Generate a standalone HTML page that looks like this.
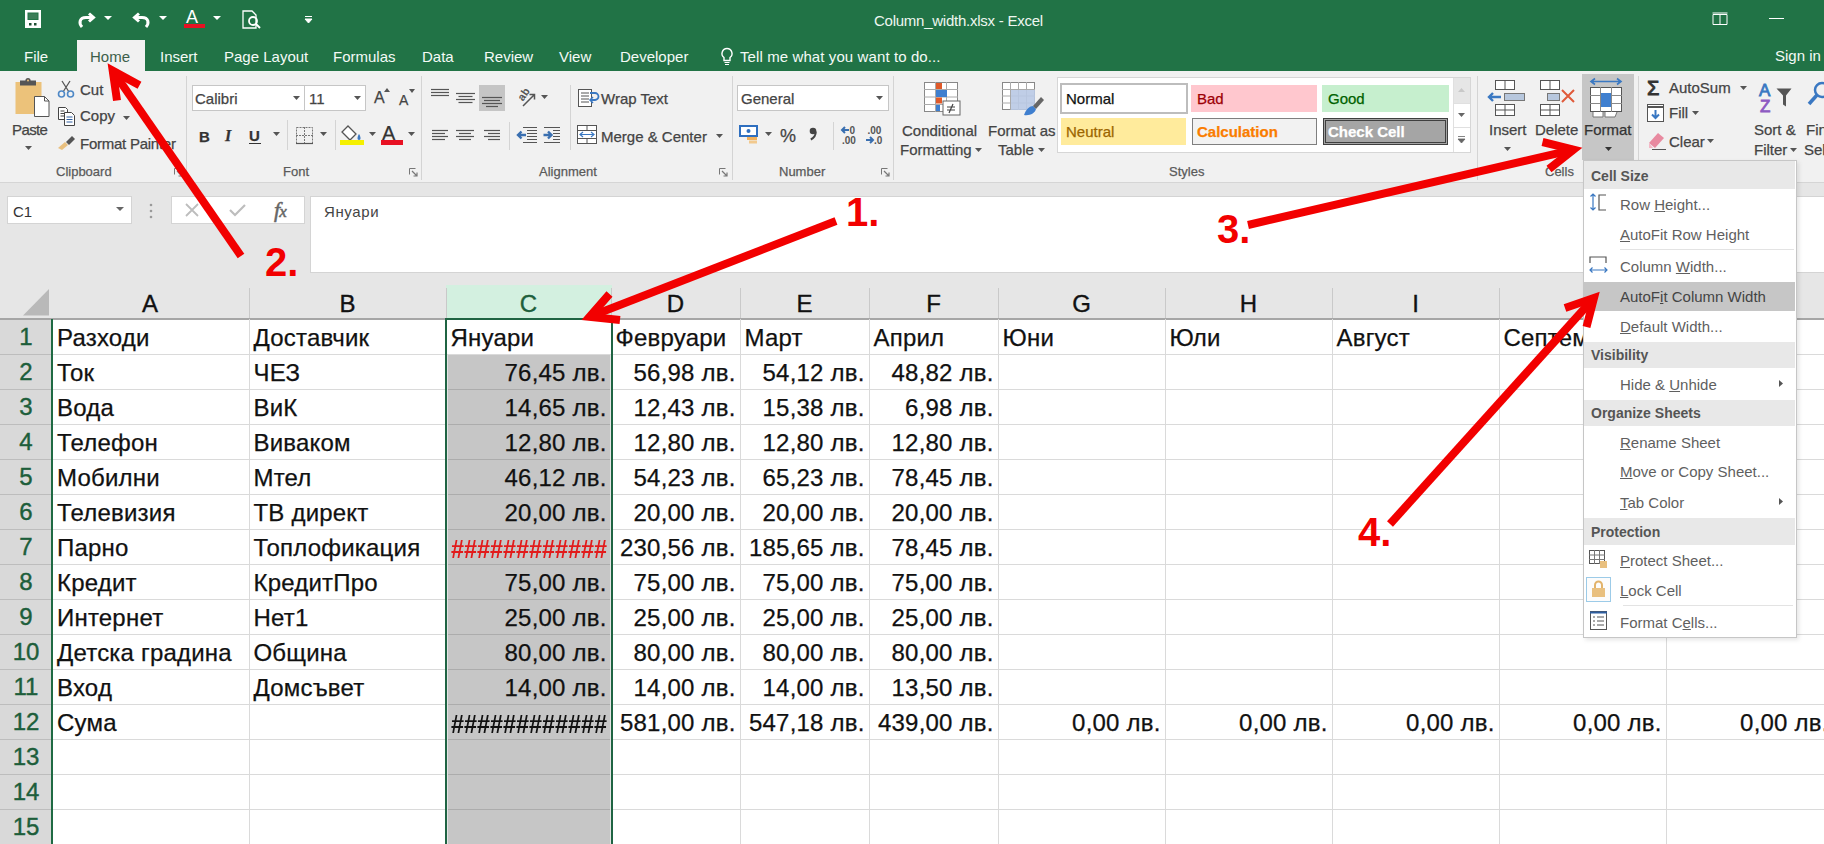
<!DOCTYPE html><html><head><meta charset="utf-8"><title>Excel</title><style>
html,body{margin:0;padding:0;}
body{width:1824px;height:844px;overflow:hidden;position:relative;background:#fff;font-family:'Liberation Sans', sans-serif;}
.t{position:absolute;white-space:nowrap;line-height:1;}
svg{overflow:visible}
</style></head><body>
<div style="position:absolute;left:0px;top:0px;width:1824px;height:71px;background:#217346;"></div>
<svg style="position:absolute;left:25px;top:10px;" width="17" height="18" viewBox="0 0 17 18"><rect x="0" y="0" width="16" height="18" fill="#ffffff"/><rect x="2.5" y="2.5" width="11" height="7.5" fill="#217346"/><rect x="3.5" y="3.5" width="9" height="5.5" fill="#3c7d58"/><rect x="4" y="13" width="2.5" height="2.5" fill="#1d4f33"/><rect x="9" y="13" width="2.5" height="2.5" fill="#1d4f33"/></svg>
<svg style="position:absolute;left:77px;top:12px;" width="20" height="17" viewBox="0 0 20 17"><path d="M5 15 C1.5 11 2.5 5.5 9 5.5 H16" fill="none" stroke="#ffffff" stroke-width="3"/><path d="M12 1.5 L16.5 5.5 L12 9.5" fill="none" stroke="#ffffff" stroke-width="3"/></svg>
<svg style="position:absolute;left:104px;top:16px;" width="8" height="5" viewBox="0 0 8 5"><path d="M0 0h8l-4 4z" fill="#ffffff"/></svg>
<svg style="position:absolute;left:131px;top:12px;" width="20" height="17" viewBox="0 0 20 17"><path d="M15 15 C18.5 11 17.5 5.5 11 5.5 H4" fill="none" stroke="#ffffff" stroke-width="3"/><path d="M8 1.5 L3.5 5.5 L8 9.5" fill="none" stroke="#ffffff" stroke-width="3"/></svg>
<svg style="position:absolute;left:159px;top:16px;" width="8" height="5" viewBox="0 0 8 5"><path d="M0 0h8l-4 4z" fill="#ffffff"/></svg>
<div class="t" style="left:186px;top:7.70px;font-size:18px;color:#ffffff;font-weight:normal;">A</div>
<div style="position:absolute;left:184px;top:24px;width:21px;height:4px;background:#e81123;"></div>
<svg style="position:absolute;left:213px;top:16px;" width="8" height="5" viewBox="0 0 8 5"><path d="M0 0h8l-4 4z" fill="#ffffff"/></svg>
<svg style="position:absolute;left:242px;top:10px;" width="20" height="19" viewBox="0 0 20 19"><path d="M1 1h9l4 4v13h-13z" fill="none" stroke="#ffffff" stroke-width="1.3"/><circle cx="11" cy="11" r="4" fill="none" stroke="#ffffff" stroke-width="1.8"/><path d="M14 14l4 4" stroke="#ffffff" stroke-width="2"/></svg>
<svg style="position:absolute;left:305px;top:16px;" width="7" height="8" viewBox="0 0 7 8"><path d="M0 0.5h7M0 3h7l-3.5 4z" fill="#ffffff" stroke="#ffffff" stroke-width="1"/></svg>
<div class="t" style="left:874px;top:13.25px;font-size:15px;color:#eef7f0;font-weight:normal;letter-spacing:-0.25px;">Column_width.xlsx - Excel</div>
<svg style="position:absolute;left:1712px;top:12px;" width="16" height="13" viewBox="0 0 16 13"><path d="M0.5 1h15M1 2.5h14v10h-14zM8 2.5v10" fill="none" stroke="#ffffff" stroke-width="1"/></svg>
<div style="position:absolute;left:1769px;top:18px;width:15px;height:1px;background:#ffffff;"></div>
<div class="t" style="left:24px;top:48.65px;font-size:15px;color:#f4faf6;font-weight:normal;">File</div>
<div style="position:absolute;left:77px;top:40px;width:68px;height:32px;background:#f1f1f1;"></div>
<div class="t" style="left:90px;top:48.65px;font-size:15px;color:#3d5f4a;font-weight:normal;">Home</div>
<div class="t" style="left:160px;top:48.65px;font-size:15px;color:#f4faf6;font-weight:normal;">Insert</div>
<div class="t" style="left:224px;top:48.65px;font-size:15px;color:#f4faf6;font-weight:normal;">Page Layout</div>
<div class="t" style="left:333px;top:48.65px;font-size:15px;color:#f4faf6;font-weight:normal;">Formulas</div>
<div class="t" style="left:422px;top:48.65px;font-size:15px;color:#f4faf6;font-weight:normal;">Data</div>
<div class="t" style="left:484px;top:48.65px;font-size:15px;color:#f4faf6;font-weight:normal;">Review</div>
<div class="t" style="left:559px;top:48.65px;font-size:15px;color:#f4faf6;font-weight:normal;">View</div>
<div class="t" style="left:620px;top:48.65px;font-size:15px;color:#f4faf6;font-weight:normal;">Developer</div>
<svg style="position:absolute;left:720px;top:47px;" width="14" height="19" viewBox="0 0 14 19"><path d="M7 1.5a5 5 0 0 1 3 9v3h-6v-3a5 5 0 0 1 3-9z" fill="none" stroke="#ffffff" stroke-width="1.4"/><path d="M4.5 15.5h5M5 17.5h4" stroke="#ffffff" stroke-width="1.2"/></svg>
<div class="t" style="left:740px;top:48.65px;font-size:15px;color:#f4faf6;font-weight:normal;letter-spacing:0.1px;">Tell me what you want to do...</div>
<div class="t" style="left:1775px;top:48.25px;font-size:15px;color:#f4faf6;font-weight:normal;">Sign in</div>
<div style="position:absolute;left:0px;top:71px;width:1824px;height:112px;background:#f1f1f1;"></div>
<div style="position:absolute;left:0px;top:182px;width:1824px;height:1px;background:#d5d5d5;"></div>
<svg style="position:absolute;left:14px;top:77px;" width="38" height="42" viewBox="0 0 38 42"><rect x="1.5" y="5" width="26" height="32" fill="#ecc27a"/><rect x="6" y="3.5" width="16" height="5" fill="#555"/><circle cx="14" cy="3.5" r="2.6" fill="#555"/><circle cx="14" cy="3.5" r="1" fill="#ecc27a"/><path d="M20.5 19.5h10l4.5 4.5v15.5h-14.5z" fill="#fff" stroke="#555" stroke-width="1"/><path d="M30.5 19.5v4.5h4.5" fill="none" stroke="#555" stroke-width="1"/></svg>
<div class="t" style="left:12px;top:122.25px;font-size:15px;color:#444444;font-weight:normal;-webkit-text-stroke-width:0.25px;letter-spacing:-0.6px;">Paste</div>
<svg style="position:absolute;left:25px;top:146px;" width="7" height="4" viewBox="0 0 7 4"><path d="M0 0h7l-3.5 4z" fill="#555"/></svg>
<svg style="position:absolute;left:57px;top:80px;" width="18" height="18" viewBox="0 0 18 18"><path d="M5 1l7 11M13 1l-7 11" stroke="#555" stroke-width="1.3"/><circle cx="4.5" cy="14" r="3" fill="none" stroke="#4e88c6" stroke-width="1.6"/><circle cx="13.5" cy="14" r="3" fill="none" stroke="#4e88c6" stroke-width="1.6"/></svg>
<div class="t" style="left:80px;top:82.25px;font-size:15px;color:#444444;font-weight:normal;-webkit-text-stroke-width:0.25px;">Cut</div>
<svg style="position:absolute;left:57px;top:106px;" width="19" height="20" viewBox="0 0 19 20"><path d="M1.5 1.5h7l2 2v10h-9z" fill="#fff" stroke="#444" stroke-width="1"/><path d="M3.5 5h4M3.5 7.5h4M3.5 10h4" stroke="#444" stroke-width="1"/><path d="M7.5 6.5h7l3 3v10h-10z" fill="#fff" stroke="#444" stroke-width="1"/><path d="M9.5 11h6M9.5 13.5h6M9.5 16h6" stroke="#2f5fa0" stroke-width="1"/></svg>
<div class="t" style="left:80px;top:108.25px;font-size:15px;color:#444444;font-weight:normal;-webkit-text-stroke-width:0.25px;">Copy</div>
<svg style="position:absolute;left:123px;top:116px;" width="7" height="4" viewBox="0 0 7 4"><path d="M0 0h7l-3.5 4z" fill="#555"/></svg>
<svg style="position:absolute;left:57px;top:135px;" width="19" height="16" viewBox="0 0 19 16"><path d="M1 13l7-6 3 3-6 5z" fill="#e9c07f"/><path d="M9 7l6-6 3 3-6 6z" fill="#555"/></svg>
<div class="t" style="left:80px;top:136.25px;font-size:15px;color:#444444;font-weight:normal;-webkit-text-stroke-width:0.25px;letter-spacing:-0.25px;">Format Painter</div>
<div class="t" style="left:56px;top:164.95px;font-size:13px;color:#5a5a5a;font-weight:normal;-webkit-text-stroke-width:0.25px;">Clipboard</div>
<svg style="position:absolute;left:174px;top:168px;" width="9" height="9" viewBox="0 0 9 9"><path d="M0.5 0.5h6M0.5 0.5v6" stroke="#777" stroke-width="1" fill="none"/><path d="M3 3l5 5M8 4.5v3.5h-3.5" stroke="#777" stroke-width="1.2" fill="none"/></svg>
<div style="position:absolute;left:186px;top:76px;width:1px;height:104px;background:#d4d4d4;"></div>
<div style="position:absolute;left:192px;top:85px;width:113px;height:26px;background:#fff;box-sizing:border-box;border:1px solid #c6c6c6;"></div>
<div class="t" style="left:195px;top:91.25px;font-size:15px;color:#444444;font-weight:normal;-webkit-text-stroke-width:0.25px;">Calibri</div>
<svg style="position:absolute;left:293px;top:96px;" width="7" height="4" viewBox="0 0 7 4"><path d="M0 0h7l-3.5 4z" fill="#555"/></svg>
<div style="position:absolute;left:304px;top:85px;width:62px;height:26px;background:#fff;box-sizing:border-box;border:1px solid #c6c6c6;"></div>
<div class="t" style="left:309px;top:91.25px;font-size:15px;color:#444444;font-weight:normal;-webkit-text-stroke-width:0.25px;">11</div>
<svg style="position:absolute;left:354px;top:96px;" width="7" height="4" viewBox="0 0 7 4"><path d="M0 0h7l-3.5 4z" fill="#555"/></svg>
<div class="t" style="left:374px;top:90.40px;font-size:16px;color:#444444;font-weight:normal;-webkit-text-stroke-width:0.25px;">A</div>
<svg style="position:absolute;left:384px;top:88px;" width="6" height="4" viewBox="0 0 6 4"><path d="M0 4l3-4 3 4z" fill="#555"/></svg>
<div class="t" style="left:399px;top:93.10px;font-size:14px;color:#444444;font-weight:normal;-webkit-text-stroke-width:0.25px;">A</div>
<svg style="position:absolute;left:409px;top:89px;" width="6" height="4" viewBox="0 0 6 4"><path d="M0 0h6l-3 4z" fill="#555"/></svg>
<div class="t" style="left:199px;top:129.25px;font-size:15px;color:#333;font-weight:bold;-webkit-text-stroke-width:0.25px;">B</div>
<div class="t" style="left:225px;top:128.40px;font-size:16px;color:#333;font-weight:normal;-webkit-text-stroke-width:0.25px;font-style:italic;font-family:'Liberation Serif';font-weight:bold;">I</div>
<div class="t" style="left:249px;top:128.25px;font-size:15px;color:#333;font-weight:bold;-webkit-text-stroke-width:0.25px;">U</div>
<div style="position:absolute;left:249px;top:143px;width:12px;height:1px;background:#333;"></div>
<svg style="position:absolute;left:273px;top:132px;" width="7" height="4" viewBox="0 0 7 4"><path d="M0 0h7l-3.5 4z" fill="#555"/></svg>
<div style="position:absolute;left:287px;top:120px;width:1px;height:30px;background:#d4d4d4;"></div>
<svg style="position:absolute;left:296px;top:127px;" width="18" height="17" viewBox="0 0 18 17"><rect x="0.5" y="0.5" width="16" height="16" fill="none" stroke="#777" stroke-width="1" stroke-dasharray="2 1"/><path d="M8.5 0v17M0 8.5h17" stroke="#777" stroke-width="1" stroke-dasharray="2 1"/><path d="M0 16.5h17" stroke="#555" stroke-width="1.2"/></svg>
<svg style="position:absolute;left:320px;top:132px;" width="7" height="4" viewBox="0 0 7 4"><path d="M0 0h7l-3.5 4z" fill="#555"/></svg>
<div style="position:absolute;left:335px;top:120px;width:1px;height:30px;background:#d4d4d4;"></div>
<svg style="position:absolute;left:339px;top:122px;" width="26" height="23" viewBox="0 0 26 23"><path d="M6 4l8 8-6 6-8-8z" fill="#fff" stroke="#555" stroke-width="1.3" transform="translate(3,0)"/><path d="M20 12c2 3 2 6 0 6s-2-3 0-6z" fill="#3a78c2"/><rect x="1" y="18" width="24" height="5" fill="#f5f000"/></svg>
<svg style="position:absolute;left:369px;top:132px;" width="7" height="4" viewBox="0 0 7 4"><path d="M0 0h7l-3.5 4z" fill="#555"/></svg>
<div class="t" style="left:382px;top:123.00px;font-size:20px;color:#333;font-weight:normal;-webkit-text-stroke-width:0.25px;">A</div>
<div style="position:absolute;left:381px;top:140px;width:22px;height:5px;background:#e81123;"></div>
<svg style="position:absolute;left:408px;top:132px;" width="7" height="4" viewBox="0 0 7 4"><path d="M0 0h7l-3.5 4z" fill="#555"/></svg>
<div class="t" style="left:283px;top:164.95px;font-size:13px;color:#5a5a5a;font-weight:normal;-webkit-text-stroke-width:0.25px;">Font</div>
<svg style="position:absolute;left:409px;top:168px;" width="9" height="9" viewBox="0 0 9 9"><path d="M0.5 0.5h6M0.5 0.5v6" stroke="#777" stroke-width="1" fill="none"/><path d="M3 3l5 5M8 4.5v3.5h-3.5" stroke="#777" stroke-width="1.2" fill="none"/></svg>
<div style="position:absolute;left:421px;top:76px;width:1px;height:104px;background:#d4d4d4;"></div>
<svg style="position:absolute;left:431px;top:88.5px;" width="22" height="18" viewBox="0 0 22 18"><path d="M0 0.5h18" stroke="#555" stroke-width="1.2"/><path d="M0 3.5h18" stroke="#555" stroke-width="1.2"/><path d="M0 6.5h18" stroke="#555" stroke-width="1.2"/></svg>
<svg style="position:absolute;left:456px;top:92.5px;" width="22" height="18" viewBox="0 0 22 18"><path d="M0 0.5h19" stroke="#555" stroke-width="1.2"/><path d="M2.5 3.5h14" stroke="#555" stroke-width="1.2"/><path d="M0 6.5h19" stroke="#555" stroke-width="1.2"/><path d="M2.5 9.5h14" stroke="#555" stroke-width="1.2"/></svg>
<div style="position:absolute;left:479px;top:85px;width:26px;height:26px;background:#c5c5c5;"></div>
<svg style="position:absolute;left:482px;top:97px;" width="22" height="18" viewBox="0 0 22 18"><path d="M0 0.5h20" stroke="#555" stroke-width="1.2"/><path d="M2 3.5h16" stroke="#555" stroke-width="1.2"/><path d="M0 6.5h20" stroke="#555" stroke-width="1.2"/><path d="M4 9.5h12" stroke="#555" stroke-width="1.2"/></svg>
<svg style="position:absolute;left:516px;top:86px;" width="24" height="22" viewBox="0 0 24 22"><text x="2" y="12" font-size="11" font-weight="bold" fill="#555" font-family="Liberation Sans" transform="rotate(-55 8 9)">ab</text><path d="M7 20l11-11M13.5 8.5h5v5" fill="none" stroke="#555" stroke-width="1.5"/></svg>
<svg style="position:absolute;left:541px;top:95px;" width="7" height="4" viewBox="0 0 7 4"><path d="M0 0h7l-3.5 4z" fill="#555"/></svg>
<div style="position:absolute;left:570px;top:85px;width:1px;height:65px;background:#d4d4d4;"></div>
<svg style="position:absolute;left:578px;top:89px;" width="22" height="19" viewBox="0 0 22 19"><rect x="0.5" y="0.5" width="13" height="17" fill="#fff" stroke="#555"/><path d="M3 4h8M3 7h8M3 10h8M3 13h8" stroke="#555"/><path d="M12 4h5a3 3 0 0 1 0 7h-4" fill="none" stroke="#3a78c2" stroke-width="1.8"/><path d="M15 8l-3 3 3 3" fill="none" stroke="#3a78c2" stroke-width="1.5"/></svg>
<div class="t" style="left:601px;top:91.25px;font-size:15px;color:#444444;font-weight:normal;-webkit-text-stroke-width:0.25px;">Wrap Text</div>
<svg style="position:absolute;left:432px;top:129.5px;" width="22" height="18" viewBox="0 0 22 18"><path d="M0 0.5h16" stroke="#555" stroke-width="1.2"/><path d="M0 3.5h13" stroke="#555" stroke-width="1.2"/><path d="M0 6.5h16" stroke="#555" stroke-width="1.2"/><path d="M0 9.5h13" stroke="#555" stroke-width="1.2"/></svg>
<svg style="position:absolute;left:456px;top:129.5px;" width="22" height="18" viewBox="0 0 22 18"><path d="M0 0.5h18" stroke="#555" stroke-width="1.2"/><path d="M3 3.5h12" stroke="#555" stroke-width="1.2"/><path d="M0 6.5h18" stroke="#555" stroke-width="1.2"/><path d="M3 9.5h12" stroke="#555" stroke-width="1.2"/></svg>
<svg style="position:absolute;left:484px;top:129.5px;" width="22" height="18" viewBox="0 0 22 18"><path d="M0 0.5h16" stroke="#555" stroke-width="1.2"/><path d="M4 3.5h12" stroke="#555" stroke-width="1.2"/><path d="M0 6.5h16" stroke="#555" stroke-width="1.2"/><path d="M4 9.5h12" stroke="#555" stroke-width="1.2"/></svg>
<div style="position:absolute;left:509px;top:122px;width:1px;height:28px;background:#d4d4d4;"></div>
<svg style="position:absolute;left:516px;top:126px;" width="22" height="18" viewBox="0 0 22 18"><path d="M7 1.5h14M11 4.5h10M11 7.5h10M11 10.5h10M11 13.5h10M7 16.5h14" stroke="#555" stroke-width="1.1"/><path d="M10 9h-8M5.5 5.5l-3.5 3.5 3.5 3.5" fill="none" stroke="#3a6fb0" stroke-width="2.4"/></svg>
<svg style="position:absolute;left:543px;top:126px;" width="22" height="18" viewBox="0 0 22 18"><path d="M1 1.5h16M10 4.5h7M10 7.5h7M10 10.5h7M10 13.5h7M1 16.5h16" stroke="#555" stroke-width="1.1"/><path d="M0.5 9h8M5 5.5l3.5 3.5-3.5 3.5" fill="none" stroke="#3a6fb0" stroke-width="2.4"/></svg>
<svg style="position:absolute;left:577px;top:125px;" width="21" height="20" viewBox="0 0 21 20"><rect x="0.5" y="0.5" width="19" height="18" fill="#fff" stroke="#555"/><path d="M0 5.5h20M0 13.5h20M10 0v5M10 14v5" stroke="#555"/><path d="M3 9.5h14M6 7l-3 2.5 3 2.5M14 7l3 2.5-3 2.5" fill="none" stroke="#3a78c2" stroke-width="1.2"/></svg>
<div class="t" style="left:601px;top:129.25px;font-size:15px;color:#444444;font-weight:normal;-webkit-text-stroke-width:0.25px;">Merge &amp; Center</div>
<svg style="position:absolute;left:716px;top:134px;" width="7" height="4" viewBox="0 0 7 4"><path d="M0 0h7l-3.5 4z" fill="#555"/></svg>
<div class="t" style="left:539px;top:164.95px;font-size:13px;color:#5a5a5a;font-weight:normal;-webkit-text-stroke-width:0.25px;">Alignment</div>
<svg style="position:absolute;left:719px;top:168px;" width="9" height="9" viewBox="0 0 9 9"><path d="M0.5 0.5h6M0.5 0.5v6" stroke="#777" stroke-width="1" fill="none"/><path d="M3 3l5 5M8 4.5v3.5h-3.5" stroke="#777" stroke-width="1.2" fill="none"/></svg>
<div style="position:absolute;left:732px;top:76px;width:1px;height:104px;background:#d4d4d4;"></div>
<div style="position:absolute;left:737px;top:85px;width:152px;height:26px;background:#fff;box-sizing:border-box;border:1px solid #c6c6c6;"></div>
<div class="t" style="left:741px;top:91.25px;font-size:15px;color:#444444;font-weight:normal;-webkit-text-stroke-width:0.25px;">General</div>
<svg style="position:absolute;left:876px;top:96px;" width="7" height="4" viewBox="0 0 7 4"><path d="M0 0h7l-3.5 4z" fill="#555"/></svg>
<svg style="position:absolute;left:739px;top:125px;" width="22" height="20" viewBox="0 0 22 20"><rect x="1" y="1" width="17" height="10" fill="#fff" stroke="#2f6fbf" stroke-width="2"/><circle cx="9.5" cy="6" r="2" fill="#2f6fbf"/><rect x="8" y="12" width="10" height="3" fill="#f2b05a"/><rect x="10" y="15.5" width="8" height="3" fill="#f2c98e"/></svg>
<svg style="position:absolute;left:765px;top:132px;" width="7" height="4" viewBox="0 0 7 4"><path d="M0 0h7l-3.5 4z" fill="#555"/></svg>
<div class="t" style="left:780px;top:126.70px;font-size:18px;color:#444444;font-weight:normal;-webkit-text-stroke-width:0.25px;">%</div>
<svg style="position:absolute;left:808px;top:127px;" width="10" height="13" viewBox="0 0 10 13"><circle cx="5" cy="4" r="3.3" fill="#444"/><path d="M7.8 4.5c0 4-2 6.5-5 8" fill="none" stroke="#444" stroke-width="2"/></svg>
<div style="position:absolute;left:833px;top:122px;width:1px;height:28px;background:#d4d4d4;"></div>
<svg style="position:absolute;left:840px;top:125px;" width="20" height="20" viewBox="0 0 20 20"><path d="M9 5h-7M5 2l-3 3 3 3" fill="none" stroke="#3a6fb0" stroke-width="2"/><text x="9.5" y="9" font-size="10" font-weight="bold" fill="#555" font-family="Liberation Sans">0</text><text x="2" y="19" font-size="10" font-weight="bold" fill="#555" font-family="Liberation Sans">.00</text></svg>
<svg style="position:absolute;left:865px;top:125px;" width="20" height="20" viewBox="0 0 20 20"><text x="2.5" y="9" font-size="10" font-weight="bold" fill="#555" font-family="Liberation Sans">.00</text><path d="M1 15h7M5 12l3 3-3 3" fill="none" stroke="#3a6fb0" stroke-width="2"/><text x="9" y="19" font-size="10" font-weight="bold" fill="#555" font-family="Liberation Sans">.0</text></svg>
<div class="t" style="left:779px;top:164.95px;font-size:13px;color:#5a5a5a;font-weight:normal;-webkit-text-stroke-width:0.25px;">Number</div>
<svg style="position:absolute;left:881px;top:168px;" width="9" height="9" viewBox="0 0 9 9"><path d="M0.5 0.5h6M0.5 0.5v6" stroke="#777" stroke-width="1" fill="none"/><path d="M3 3l5 5M8 4.5v3.5h-3.5" stroke="#777" stroke-width="1.2" fill="none"/></svg>
<div style="position:absolute;left:893px;top:76px;width:1px;height:104px;background:#d4d4d4;"></div>
<svg style="position:absolute;left:924px;top:82px;" width="38" height="36" viewBox="0 0 38 36"><g stroke="#888" stroke-width="1" fill="#fff"><rect x="0.5" y="0.5" width="33" height="29"/></g><path d="M0 7.5h34M0 15h34M0 22.5h34M11.5 0v30M22.5 0v30" stroke="#aaa" stroke-width="1"/><rect x="12" y="1" width="6" height="6" fill="#e05a2a"/><rect x="12" y="8" width="11" height="7" fill="#3f7fcf"/><rect x="12" y="15.5" width="6" height="6" fill="#e05a2a"/><rect x="12" y="23" width="4" height="6" fill="#3f7fcf"/><rect x="19" y="19" width="17" height="14" fill="#fff" stroke="#666"/><path d="M23 25h8M23 28h8M29 22l-4 9" stroke="#444" stroke-width="1.2"/></svg>
<div class="t" style="left:902px;top:123.25px;font-size:15px;color:#444444;font-weight:normal;-webkit-text-stroke-width:0.25px;">Conditional</div>
<div class="t" style="left:900px;top:142.25px;font-size:15px;color:#444444;font-weight:normal;-webkit-text-stroke-width:0.25px;">Formatting</div>
<svg style="position:absolute;left:975px;top:148px;" width="7" height="4" viewBox="0 0 7 4"><path d="M0 0h7l-3.5 4z" fill="#555"/></svg>
<svg style="position:absolute;left:1002px;top:82px;" width="42" height="36" viewBox="0 0 42 36"><rect x="0.5" y="0.5" width="32" height="27" fill="#fff" stroke="#888"/><path d="M0 7.5h33M0 14h33M0 21h33M8.5 0v28M16.5 0v28M24.5 0v28" stroke="#aaa"/><rect x="9" y="8" width="24" height="20" fill="#b9c9e4" opacity="0.9"/><path d="M22 33c2-6 6-9 9-9l3 3c-1 4-6 7-12 6z" fill="#3f7fcf"/><path d="M31 24l8-9 3 3-8 9z" fill="#666"/></svg>
<div class="t" style="left:988px;top:123.25px;font-size:15px;color:#444444;font-weight:normal;-webkit-text-stroke-width:0.25px;">Format as</div>
<div class="t" style="left:998px;top:142.25px;font-size:15px;color:#444444;font-weight:normal;-webkit-text-stroke-width:0.25px;">Table</div>
<svg style="position:absolute;left:1038px;top:148px;" width="7" height="4" viewBox="0 0 7 4"><path d="M0 0h7l-3.5 4z" fill="#555"/></svg>
<div style="position:absolute;left:1057px;top:77px;width:414px;height:76px;background:#fff;box-sizing:border-box;border:1px solid #d6d6d6;"></div>
<div style="position:absolute;left:1060px;top:83px;width:128px;height:31px;background:#fff;box-sizing:border-box;border:2px solid #bdbdbd;"></div>
<div class="t" style="left:1066px;top:91.25px;font-size:15px;color:#111;font-weight:normal;-webkit-text-stroke-width:0.25px;">Normal</div>
<div style="position:absolute;left:1191px;top:85px;width:126px;height:27px;background:#ffc7ce;"></div>
<div class="t" style="left:1197px;top:91.25px;font-size:15px;color:#9c0006;font-weight:normal;-webkit-text-stroke-width:0.25px;">Bad</div>
<div style="position:absolute;left:1322px;top:85px;width:127px;height:27px;background:#c6efce;"></div>
<div class="t" style="left:1328px;top:91.25px;font-size:15px;color:#006100;font-weight:normal;-webkit-text-stroke-width:0.25px;">Good</div>
<div style="position:absolute;left:1061px;top:118px;width:125px;height:27px;background:#ffeb9c;"></div>
<div class="t" style="left:1066px;top:124.25px;font-size:15px;color:#9c6500;font-weight:normal;-webkit-text-stroke-width:0.25px;">Neutral</div>
<div style="position:absolute;left:1192px;top:118px;width:125px;height:27px;background:#f2f2f2;box-sizing:border-box;border:1px solid #7f7f7f;"></div>
<div class="t" style="left:1197px;top:124.25px;font-size:15px;color:#fa7d00;font-weight:bold;-webkit-text-stroke-width:0.25px;">Calculation</div>
<div style="position:absolute;left:1323px;top:118px;width:125px;height:27px;background:#a5a5a5;box-sizing:border-box;border:3px double #3f3f3f;"></div>
<div class="t" style="left:1328px;top:124.25px;font-size:15px;color:#fff;font-weight:bold;-webkit-text-stroke-width:0.25px;">Check Cell</div>
<div style="position:absolute;left:1453px;top:78px;width:17px;height:74px;background:#fff;box-sizing:border-box;border-left:1px solid #e0e0e0;"></div>
<div style="position:absolute;left:1454px;top:78px;width:16px;height:25px;background:#e6e6e6;"></div>
<svg style="position:absolute;left:1458px;top:88px;" width="7" height="4" viewBox="0 0 7 4"><path d="M0 4l3.5-4 3.5 4z" fill="#c8c8c8"/></svg>
<div style="position:absolute;left:1454px;top:103px;width:16px;height:1px;background:#e0e0e0;"></div>
<svg style="position:absolute;left:1458px;top:113px;" width="7" height="4" viewBox="0 0 7 4"><path d="M0 0h7l-3.5 4z" fill="#666"/></svg>
<div style="position:absolute;left:1454px;top:127px;width:16px;height:1px;background:#e0e0e0;"></div>
<svg style="position:absolute;left:1458px;top:136px;" width="7" height="7" viewBox="0 0 7 7"><path d="M0 0.5h7M0 3h7l-3.5 4z" fill="#666" stroke="#666" stroke-width="0.8"/></svg>
<div class="t" style="left:1169px;top:164.95px;font-size:13px;color:#5a5a5a;font-weight:normal;-webkit-text-stroke-width:0.25px;">Styles</div>
<div style="position:absolute;left:1477px;top:76px;width:1px;height:104px;background:#d4d4d4;"></div>
<svg style="position:absolute;left:1487px;top:80px;" width="40" height="36" viewBox="0 0 40 36"><rect x="8.5" y="0.5" width="19" height="9" fill="#fff" stroke="#555"/><path d="M18 0v10" stroke="#555"/><rect x="17.5" y="13.5" width="20" height="7" fill="#b7c7dd" stroke="#777"/><path d="M14 17h-12M6 13l-4 4 4 4" fill="none" stroke="#3a78c2" stroke-width="2.4"/><rect x="8.5" y="24.5" width="19" height="11" fill="#fff" stroke="#555"/><path d="M18 24v12M8 30h20" stroke="#555"/></svg>
<div class="t" style="left:1489px;top:122.25px;font-size:15px;color:#444444;font-weight:normal;-webkit-text-stroke-width:0.25px;">Insert</div>
<svg style="position:absolute;left:1504px;top:147px;" width="7" height="4" viewBox="0 0 7 4"><path d="M0 0h7l-3.5 4z" fill="#555"/></svg>
<svg style="position:absolute;left:1540px;top:80px;" width="40" height="36" viewBox="0 0 40 36"><rect x="0.5" y="0.5" width="19" height="9" fill="#fff" stroke="#555"/><path d="M10 0v10" stroke="#555"/><rect x="7.5" y="13.5" width="12" height="7" fill="#b7c7dd" stroke="#777"/><path d="M22 10l12 12M34 10l-12 12" stroke="#e05a3a" stroke-width="2"/><rect x="0.5" y="24.5" width="19" height="11" fill="#fff" stroke="#555"/><path d="M10 24v12M0 30h20" stroke="#555"/></svg>
<div class="t" style="left:1535px;top:122.25px;font-size:15px;color:#444444;font-weight:normal;-webkit-text-stroke-width:0.25px;">Delete</div>
<div style="position:absolute;left:1582px;top:74px;width:52px;height:86px;background:#c6c6c6;"></div>
<svg style="position:absolute;left:1589px;top:78px;" width="38" height="42" viewBox="0 0 38 42"><path d="M2 3.5h30M6 0.5l-4 3 4 3M28 0.5l4 3-4 3" fill="none" stroke="#3a78c2" stroke-width="1.6"/><rect x="1.5" y="9.5" width="31" height="24" fill="#fff" stroke="#555"/><path d="M1 17.5h32M1 25.5h32M11.5 9v25M22.5 9v25" stroke="#888"/><rect x="12" y="15" width="10" height="14" fill="#3f7fcf"/><path d="M4 34v5h10v-5M16 34v5h10l2-5" fill="#fff" stroke="#777"/></svg>
<div class="t" style="left:1584px;top:122.25px;font-size:15px;color:#333;font-weight:normal;-webkit-text-stroke-width:0.25px;">Format</div>
<svg style="position:absolute;left:1605px;top:147px;" width="7" height="4" viewBox="0 0 7 4"><path d="M0 0h7l-3.5 4z" fill="#333"/></svg>
<div class="t" style="left:1545px;top:164.95px;font-size:13px;color:#5a5a5a;font-weight:normal;-webkit-text-stroke-width:0.25px;">Cells</div>
<div style="position:absolute;left:1638px;top:76px;width:1px;height:104px;background:#d4d4d4;"></div>
<div class="t" style="left:1647px;top:78.00px;font-size:20px;color:#333;font-weight:normal;-webkit-text-stroke-width:0.25px;-webkit-text-stroke-width:0.9px;">&#931;</div>
<div class="t" style="left:1669px;top:80.25px;font-size:15px;color:#444444;font-weight:normal;-webkit-text-stroke-width:0.25px;">AutoSum</div>
<svg style="position:absolute;left:1740px;top:86px;" width="7" height="4" viewBox="0 0 7 4"><path d="M0 0h7l-3.5 4z" fill="#555"/></svg>
<svg style="position:absolute;left:1647px;top:104px;" width="18" height="19" viewBox="0 0 18 19"><rect x="0.5" y="0.5" width="16" height="17" fill="#fff" stroke="#555"/><path d="M0 3h17" stroke="#555" stroke-width="2"/><path d="M8.5 6v8M5 10.5l3.5 3.5 3.5-3.5" fill="none" stroke="#3a78c2" stroke-width="2"/></svg>
<div class="t" style="left:1669px;top:105.25px;font-size:15px;color:#444444;font-weight:normal;-webkit-text-stroke-width:0.25px;">Fill</div>
<svg style="position:absolute;left:1692px;top:111px;" width="7" height="4" viewBox="0 0 7 4"><path d="M0 0h7l-3.5 4z" fill="#555"/></svg>
<svg style="position:absolute;left:1647px;top:131px;" width="20" height="19" viewBox="0 0 20 19"><path d="M2 12l9-10 6 5-9 10z" fill="#e88aa0"/><path d="M2 12l4 5h-4z" fill="#f4b8c6"/><path d="M5 18.5h14" stroke="#555"/></svg>
<div class="t" style="left:1669px;top:134.25px;font-size:15px;color:#444444;font-weight:normal;-webkit-text-stroke-width:0.25px;">Clear</div>
<svg style="position:absolute;left:1707px;top:139px;" width="7" height="4" viewBox="0 0 7 4"><path d="M0 0h7l-3.5 4z" fill="#555"/></svg>
<div class="t" style="left:1759px;top:81.55px;font-size:17px;color:#3a78c2;font-weight:normal;-webkit-text-stroke-width:0.25px;-webkit-text-stroke-width:0.8px;">A</div>
<div class="t" style="left:1760px;top:97.55px;font-size:17px;color:#8e5bc2;font-weight:normal;-webkit-text-stroke-width:0.25px;-webkit-text-stroke-width:0.8px;">Z</div>
<svg style="position:absolute;left:1776px;top:88px;" width="17" height="20" viewBox="0 0 17 20"><path d="M0.5 0.5h15l-5.5 7v11l-3-2v-9z" fill="#555"/></svg>
<div class="t" style="left:1754px;top:122.25px;font-size:15px;color:#444444;font-weight:normal;-webkit-text-stroke-width:0.25px;">Sort &amp;</div>
<div class="t" style="left:1754px;top:142.25px;font-size:15px;color:#444444;font-weight:normal;-webkit-text-stroke-width:0.25px;">Filter</div>
<svg style="position:absolute;left:1790px;top:148px;" width="7" height="4" viewBox="0 0 7 4"><path d="M0 0h7l-3.5 4z" fill="#555"/></svg>
<svg style="position:absolute;left:1808px;top:80px;" width="20" height="34" viewBox="0 0 20 34"><circle cx="14" cy="10" r="7" fill="none" stroke="#3a78c2" stroke-width="2.5"/><path d="M9 15l-8 9" stroke="#3a78c2" stroke-width="3.5"/></svg>
<div class="t" style="left:1806px;top:122.25px;font-size:15px;color:#444444;font-weight:normal;-webkit-text-stroke-width:0.25px;">Find &amp;</div>
<div class="t" style="left:1804px;top:142.25px;font-size:15px;color:#444444;font-weight:normal;-webkit-text-stroke-width:0.25px;">Select</div>
<div style="position:absolute;left:0px;top:183px;width:1824px;height:102px;background:#e6e6e6;"></div>
<div style="position:absolute;left:7px;top:196px;width:125px;height:28px;background:#fff;box-sizing:border-box;border:1px solid #d4d4d4;"></div>
<div class="t" style="left:13px;top:204.25px;font-size:15px;color:#333;font-weight:normal;">C1</div>
<svg style="position:absolute;left:116px;top:207px;" width="8" height="4" viewBox="0 0 8 4"><path d="M0 0h8l-4 4z" fill="#666"/></svg>
<svg style="position:absolute;left:149px;top:203px;" width="4" height="16" viewBox="0 0 4 16"><circle cx="2" cy="2" r="1.3" fill="#9a9a9a"/><circle cx="2" cy="8" r="1.3" fill="#9a9a9a"/><circle cx="2" cy="14" r="1.3" fill="#9a9a9a"/></svg>
<div style="position:absolute;left:171px;top:196px;width:134px;height:28px;background:#fff;box-sizing:border-box;border:1px solid #d4d4d4;"></div>
<svg style="position:absolute;left:184px;top:202px;" width="16" height="16" viewBox="0 0 16 16"><path d="M2 2l12 12M14 2l-12 12" stroke="#bdbdbd" stroke-width="1.8"/></svg>
<svg style="position:absolute;left:229px;top:203px;" width="17" height="14" viewBox="0 0 17 14"><path d="M1 7l5 5 10-10" fill="none" stroke="#bdbdbd" stroke-width="2.2"/></svg>
<div class="t" style="left:274px;top:199.30px;font-size:22px;color:#666;font-weight:normal;font-family:'Liberation Serif';font-style:italic;-webkit-text-stroke:0.5px #666;">f<span style="font-size:17px;margin-left:-1px">x</span></div>
<div style="position:absolute;left:310px;top:196px;width:1514px;height:77px;background:#fff;box-sizing:border-box;border:1px solid #d4d4d4;border-right:none;"></div>
<div class="t" style="left:324px;top:204.25px;font-size:15px;color:#444;font-weight:normal;letter-spacing:0.6px;">Януари</div>
<div style="position:absolute;left:0px;top:285px;width:1824px;height:34px;background:#e6e6e6;"></div>
<svg style="position:absolute;left:23px;top:289px;" width="27" height="27" viewBox="0 0 27 27"><path d="M26 0v26.5h-26z" fill="#b9b9b9"/></svg>
<div style="position:absolute;left:446px;top:285px;width:166px;height:33px;background:#d3f0e0;"></div>
<div class="t" style="left:-150.0px;width:600px;text-align:center;top:292.10px;font-size:24px;color:#111;font-weight:normal;-webkit-text-stroke:0.35px #111;">A</div>
<div style="position:absolute;left:249px;top:288px;width:1px;height:31px;background:#c9c9c9;"></div>
<div class="t" style="left:47.5px;width:600px;text-align:center;top:292.10px;font-size:24px;color:#111;font-weight:normal;-webkit-text-stroke:0.35px #111;">B</div>
<div style="position:absolute;left:446px;top:288px;width:1px;height:31px;background:#c9c9c9;"></div>
<div class="t" style="left:228.5px;width:600px;text-align:center;top:292.10px;font-size:24px;color:#1e5f3c;font-weight:normal;-webkit-text-stroke:0.35px #1e5f3c;">C</div>
<div style="position:absolute;left:611px;top:288px;width:1px;height:31px;background:#c9c9c9;"></div>
<div class="t" style="left:375.5px;width:600px;text-align:center;top:292.10px;font-size:24px;color:#111;font-weight:normal;-webkit-text-stroke:0.35px #111;">D</div>
<div style="position:absolute;left:740px;top:288px;width:1px;height:31px;background:#c9c9c9;"></div>
<div class="t" style="left:504.5px;width:600px;text-align:center;top:292.10px;font-size:24px;color:#111;font-weight:normal;-webkit-text-stroke:0.35px #111;">E</div>
<div style="position:absolute;left:869px;top:288px;width:1px;height:31px;background:#c9c9c9;"></div>
<div class="t" style="left:633.5px;width:600px;text-align:center;top:292.10px;font-size:24px;color:#111;font-weight:normal;-webkit-text-stroke:0.35px #111;">F</div>
<div style="position:absolute;left:998px;top:288px;width:1px;height:31px;background:#c9c9c9;"></div>
<div class="t" style="left:781.5px;width:600px;text-align:center;top:292.10px;font-size:24px;color:#111;font-weight:normal;-webkit-text-stroke:0.35px #111;">G</div>
<div style="position:absolute;left:1165px;top:288px;width:1px;height:31px;background:#c9c9c9;"></div>
<div class="t" style="left:948.5px;width:600px;text-align:center;top:292.10px;font-size:24px;color:#111;font-weight:normal;-webkit-text-stroke:0.35px #111;">H</div>
<div style="position:absolute;left:1332px;top:288px;width:1px;height:31px;background:#c9c9c9;"></div>
<div class="t" style="left:1115.5px;width:600px;text-align:center;top:292.10px;font-size:24px;color:#111;font-weight:normal;-webkit-text-stroke:0.35px #111;">I</div>
<div style="position:absolute;left:1499px;top:288px;width:1px;height:31px;background:#c9c9c9;"></div>
<div style="position:absolute;left:1666px;top:288px;width:1px;height:31px;background:#c9c9c9;"></div>
<div style="position:absolute;left:1833px;top:288px;width:1px;height:31px;background:#c9c9c9;"></div>
<div style="position:absolute;left:0px;top:318px;width:1824px;height:2px;background:#a6a6a6;"></div>
<div style="position:absolute;left:0px;top:320px;width:51px;height:525px;background:#d9d9d9;"></div>
<div style="position:absolute;left:51px;top:320px;width:1773px;height:525px;background:#fff;"></div>
<div style="position:absolute;left:448px;top:354px;width:162px;height:490px;background:#c6c6c6;"></div>
<div style="position:absolute;left:51px;top:354px;width:1773px;height:1px;background:#dadada;"></div>
<div style="position:absolute;left:0px;top:354px;width:51px;height:1px;background:#bdbdbd;"></div>
<div style="position:absolute;left:51px;top:389px;width:1773px;height:1px;background:#dadada;"></div>
<div style="position:absolute;left:0px;top:389px;width:51px;height:1px;background:#bdbdbd;"></div>
<div style="position:absolute;left:51px;top:424px;width:1773px;height:1px;background:#dadada;"></div>
<div style="position:absolute;left:0px;top:424px;width:51px;height:1px;background:#bdbdbd;"></div>
<div style="position:absolute;left:51px;top:459px;width:1773px;height:1px;background:#dadada;"></div>
<div style="position:absolute;left:0px;top:459px;width:51px;height:1px;background:#bdbdbd;"></div>
<div style="position:absolute;left:51px;top:494px;width:1773px;height:1px;background:#dadada;"></div>
<div style="position:absolute;left:0px;top:494px;width:51px;height:1px;background:#bdbdbd;"></div>
<div style="position:absolute;left:51px;top:529px;width:1773px;height:1px;background:#dadada;"></div>
<div style="position:absolute;left:0px;top:529px;width:51px;height:1px;background:#bdbdbd;"></div>
<div style="position:absolute;left:51px;top:564px;width:1773px;height:1px;background:#dadada;"></div>
<div style="position:absolute;left:0px;top:564px;width:51px;height:1px;background:#bdbdbd;"></div>
<div style="position:absolute;left:51px;top:599px;width:1773px;height:1px;background:#dadada;"></div>
<div style="position:absolute;left:0px;top:599px;width:51px;height:1px;background:#bdbdbd;"></div>
<div style="position:absolute;left:51px;top:634px;width:1773px;height:1px;background:#dadada;"></div>
<div style="position:absolute;left:0px;top:634px;width:51px;height:1px;background:#bdbdbd;"></div>
<div style="position:absolute;left:51px;top:669px;width:1773px;height:1px;background:#dadada;"></div>
<div style="position:absolute;left:0px;top:669px;width:51px;height:1px;background:#bdbdbd;"></div>
<div style="position:absolute;left:51px;top:704px;width:1773px;height:1px;background:#dadada;"></div>
<div style="position:absolute;left:0px;top:704px;width:51px;height:1px;background:#bdbdbd;"></div>
<div style="position:absolute;left:51px;top:739px;width:1773px;height:1px;background:#dadada;"></div>
<div style="position:absolute;left:0px;top:739px;width:51px;height:1px;background:#bdbdbd;"></div>
<div style="position:absolute;left:51px;top:774px;width:1773px;height:1px;background:#dadada;"></div>
<div style="position:absolute;left:0px;top:774px;width:51px;height:1px;background:#bdbdbd;"></div>
<div style="position:absolute;left:51px;top:809px;width:1773px;height:1px;background:#dadada;"></div>
<div style="position:absolute;left:0px;top:809px;width:51px;height:1px;background:#bdbdbd;"></div>
<div style="position:absolute;left:51px;top:844px;width:1773px;height:1px;background:#dadada;"></div>
<div style="position:absolute;left:0px;top:844px;width:51px;height:1px;background:#bdbdbd;"></div>
<div style="position:absolute;left:448px;top:0px;width:0px;height:0px;background:#000;"></div>
<div style="position:absolute;left:249px;top:319px;width:1px;height:525px;background:#dadada;"></div>
<div style="position:absolute;left:446px;top:319px;width:1px;height:525px;background:#dadada;"></div>
<div style="position:absolute;left:611px;top:319px;width:1px;height:525px;background:#dadada;"></div>
<div style="position:absolute;left:740px;top:319px;width:1px;height:525px;background:#dadada;"></div>
<div style="position:absolute;left:869px;top:319px;width:1px;height:525px;background:#dadada;"></div>
<div style="position:absolute;left:998px;top:319px;width:1px;height:525px;background:#dadada;"></div>
<div style="position:absolute;left:1165px;top:319px;width:1px;height:525px;background:#dadada;"></div>
<div style="position:absolute;left:1332px;top:319px;width:1px;height:525px;background:#dadada;"></div>
<div style="position:absolute;left:1499px;top:319px;width:1px;height:525px;background:#dadada;"></div>
<div style="position:absolute;left:1666px;top:319px;width:1px;height:525px;background:#dadada;"></div>
<div style="position:absolute;left:448px;top:389px;width:162px;height:1px;background:#acacac;"></div>
<div style="position:absolute;left:448px;top:424px;width:162px;height:1px;background:#acacac;"></div>
<div style="position:absolute;left:448px;top:459px;width:162px;height:1px;background:#acacac;"></div>
<div style="position:absolute;left:448px;top:494px;width:162px;height:1px;background:#acacac;"></div>
<div style="position:absolute;left:448px;top:529px;width:162px;height:1px;background:#acacac;"></div>
<div style="position:absolute;left:448px;top:564px;width:162px;height:1px;background:#acacac;"></div>
<div style="position:absolute;left:448px;top:599px;width:162px;height:1px;background:#acacac;"></div>
<div style="position:absolute;left:448px;top:634px;width:162px;height:1px;background:#acacac;"></div>
<div style="position:absolute;left:448px;top:669px;width:162px;height:1px;background:#acacac;"></div>
<div style="position:absolute;left:448px;top:704px;width:162px;height:1px;background:#acacac;"></div>
<div style="position:absolute;left:448px;top:739px;width:162px;height:1px;background:#acacac;"></div>
<div style="position:absolute;left:448px;top:774px;width:162px;height:1px;background:#acacac;"></div>
<div style="position:absolute;left:448px;top:809px;width:162px;height:1px;background:#acacac;"></div>
<div style="position:absolute;left:448px;top:844px;width:162px;height:1px;background:#acacac;"></div>
<div style="position:absolute;left:51px;top:319px;width:2px;height:525px;background:#1f6a43;"></div>
<div style="position:absolute;left:445px;top:318px;width:2px;height:526px;background:#1f6443;"></div>
<div style="position:absolute;left:611px;top:318px;width:2px;height:526px;background:#1f6443;"></div>
<div style="position:absolute;left:445px;top:318px;width:168px;height:2px;background:#1f6443;"></div>
<div style="position:absolute;left:447px;top:355px;width:1px;height:490px;background:#e4e4e4;"></div>
<div style="position:absolute;left:610px;top:355px;width:1px;height:490px;background:#e4e4e4;"></div>
<div class="t" style="left:-274px;width:600px;text-align:center;top:325.30px;font-size:24px;color:#1d5e3b;font-weight:normal;-webkit-text-stroke:0.4px #1d5e3b;">1</div>
<div class="t" style="left:-274px;width:600px;text-align:center;top:360.30px;font-size:24px;color:#1d5e3b;font-weight:normal;-webkit-text-stroke:0.4px #1d5e3b;">2</div>
<div class="t" style="left:-274px;width:600px;text-align:center;top:395.30px;font-size:24px;color:#1d5e3b;font-weight:normal;-webkit-text-stroke:0.4px #1d5e3b;">3</div>
<div class="t" style="left:-274px;width:600px;text-align:center;top:430.30px;font-size:24px;color:#1d5e3b;font-weight:normal;-webkit-text-stroke:0.4px #1d5e3b;">4</div>
<div class="t" style="left:-274px;width:600px;text-align:center;top:465.30px;font-size:24px;color:#1d5e3b;font-weight:normal;-webkit-text-stroke:0.4px #1d5e3b;">5</div>
<div class="t" style="left:-274px;width:600px;text-align:center;top:500.30px;font-size:24px;color:#1d5e3b;font-weight:normal;-webkit-text-stroke:0.4px #1d5e3b;">6</div>
<div class="t" style="left:-274px;width:600px;text-align:center;top:535.30px;font-size:24px;color:#1d5e3b;font-weight:normal;-webkit-text-stroke:0.4px #1d5e3b;">7</div>
<div class="t" style="left:-274px;width:600px;text-align:center;top:570.30px;font-size:24px;color:#1d5e3b;font-weight:normal;-webkit-text-stroke:0.4px #1d5e3b;">8</div>
<div class="t" style="left:-274px;width:600px;text-align:center;top:605.30px;font-size:24px;color:#1d5e3b;font-weight:normal;-webkit-text-stroke:0.4px #1d5e3b;">9</div>
<div class="t" style="left:-274px;width:600px;text-align:center;top:640.30px;font-size:24px;color:#1d5e3b;font-weight:normal;-webkit-text-stroke:0.4px #1d5e3b;">10</div>
<div class="t" style="left:-274px;width:600px;text-align:center;top:675.30px;font-size:24px;color:#1d5e3b;font-weight:normal;-webkit-text-stroke:0.4px #1d5e3b;">11</div>
<div class="t" style="left:-274px;width:600px;text-align:center;top:710.30px;font-size:24px;color:#1d5e3b;font-weight:normal;-webkit-text-stroke:0.4px #1d5e3b;">12</div>
<div class="t" style="left:-274px;width:600px;text-align:center;top:745.30px;font-size:24px;color:#1d5e3b;font-weight:normal;-webkit-text-stroke:0.4px #1d5e3b;">13</div>
<div class="t" style="left:-274px;width:600px;text-align:center;top:780.30px;font-size:24px;color:#1d5e3b;font-weight:normal;-webkit-text-stroke:0.4px #1d5e3b;">14</div>
<div class="t" style="left:-274px;width:600px;text-align:center;top:815.30px;font-size:24px;color:#1d5e3b;font-weight:normal;-webkit-text-stroke:0.4px #1d5e3b;">15</div>
<div style="position:absolute;left:0;top:0;width:1824px;height:844px;overflow:hidden">
<div class="t" style="left:57px;top:326.40px;font-size:24px;color:#111;font-weight:normal;letter-spacing:0.2px;-webkit-text-stroke:0.25px #111;">Разходи</div>
<div class="t" style="left:253.5px;top:326.40px;font-size:24px;color:#111;font-weight:normal;letter-spacing:0.2px;-webkit-text-stroke:0.25px #111;">Доставчик</div>
<div class="t" style="left:450.5px;top:326.40px;font-size:24px;color:#111;font-weight:normal;letter-spacing:0.2px;-webkit-text-stroke:0.25px #111;">Януари</div>
<div class="t" style="left:615.5px;top:326.40px;font-size:24px;color:#111;font-weight:normal;letter-spacing:0.2px;-webkit-text-stroke:0.25px #111;">Февруари</div>
<div class="t" style="left:744.5px;top:326.40px;font-size:24px;color:#111;font-weight:normal;letter-spacing:0.2px;-webkit-text-stroke:0.25px #111;">Март</div>
<div class="t" style="left:873.5px;top:326.40px;font-size:24px;color:#111;font-weight:normal;letter-spacing:0.2px;-webkit-text-stroke:0.25px #111;">Април</div>
<div class="t" style="left:1002.5px;top:326.40px;font-size:24px;color:#111;font-weight:normal;letter-spacing:0.2px;-webkit-text-stroke:0.25px #111;">Юни</div>
<div class="t" style="left:1169.5px;top:326.40px;font-size:24px;color:#111;font-weight:normal;letter-spacing:0.2px;-webkit-text-stroke:0.25px #111;">Юли</div>
<div class="t" style="left:1336.5px;top:326.40px;font-size:24px;color:#111;font-weight:normal;letter-spacing:0.2px;-webkit-text-stroke:0.25px #111;">Август</div>
<div class="t" style="left:1503.5px;top:326.40px;font-size:24px;color:#111;font-weight:normal;letter-spacing:0.2px;-webkit-text-stroke:0.25px #111;">Септември</div>
<div class="t" style="left:57px;top:361.40px;font-size:24px;color:#111;font-weight:normal;letter-spacing:0.2px;-webkit-text-stroke:0.25px #111;">Ток</div>
<div class="t" style="left:253.5px;top:361.40px;font-size:24px;color:#111;font-weight:normal;letter-spacing:0.2px;-webkit-text-stroke:0.25px #111;">ЧЕЗ</div>
<div class="t" style="right:1217.5px;top:361.40px;font-size:24px;color:#111;font-weight:normal;letter-spacing:0.2px;-webkit-text-stroke:0.25px #111;">76,45 лв.</div>
<div class="t" style="right:1088.5px;top:361.40px;font-size:24px;color:#111;font-weight:normal;letter-spacing:0.2px;-webkit-text-stroke:0.25px #111;">56,98 лв.</div>
<div class="t" style="right:959.5px;top:361.40px;font-size:24px;color:#111;font-weight:normal;letter-spacing:0.2px;-webkit-text-stroke:0.25px #111;">54,12 лв.</div>
<div class="t" style="right:830.5px;top:361.40px;font-size:24px;color:#111;font-weight:normal;letter-spacing:0.2px;-webkit-text-stroke:0.25px #111;">48,82 лв.</div>
<div class="t" style="left:57px;top:396.40px;font-size:24px;color:#111;font-weight:normal;letter-spacing:0.2px;-webkit-text-stroke:0.25px #111;">Вода</div>
<div class="t" style="left:253.5px;top:396.40px;font-size:24px;color:#111;font-weight:normal;letter-spacing:0.2px;-webkit-text-stroke:0.25px #111;">ВиК</div>
<div class="t" style="right:1217.5px;top:396.40px;font-size:24px;color:#111;font-weight:normal;letter-spacing:0.2px;-webkit-text-stroke:0.25px #111;">14,65 лв.</div>
<div class="t" style="right:1088.5px;top:396.40px;font-size:24px;color:#111;font-weight:normal;letter-spacing:0.2px;-webkit-text-stroke:0.25px #111;">12,43 лв.</div>
<div class="t" style="right:959.5px;top:396.40px;font-size:24px;color:#111;font-weight:normal;letter-spacing:0.2px;-webkit-text-stroke:0.25px #111;">15,38 лв.</div>
<div class="t" style="right:830.5px;top:396.40px;font-size:24px;color:#111;font-weight:normal;letter-spacing:0.2px;-webkit-text-stroke:0.25px #111;">6,98 лв.</div>
<div class="t" style="left:57px;top:431.40px;font-size:24px;color:#111;font-weight:normal;letter-spacing:0.2px;-webkit-text-stroke:0.25px #111;">Телефон</div>
<div class="t" style="left:253.5px;top:431.40px;font-size:24px;color:#111;font-weight:normal;letter-spacing:0.2px;-webkit-text-stroke:0.25px #111;">Виваком</div>
<div class="t" style="right:1217.5px;top:431.40px;font-size:24px;color:#111;font-weight:normal;letter-spacing:0.2px;-webkit-text-stroke:0.25px #111;">12,80 лв.</div>
<div class="t" style="right:1088.5px;top:431.40px;font-size:24px;color:#111;font-weight:normal;letter-spacing:0.2px;-webkit-text-stroke:0.25px #111;">12,80 лв.</div>
<div class="t" style="right:959.5px;top:431.40px;font-size:24px;color:#111;font-weight:normal;letter-spacing:0.2px;-webkit-text-stroke:0.25px #111;">12,80 лв.</div>
<div class="t" style="right:830.5px;top:431.40px;font-size:24px;color:#111;font-weight:normal;letter-spacing:0.2px;-webkit-text-stroke:0.25px #111;">12,80 лв.</div>
<div class="t" style="left:57px;top:466.40px;font-size:24px;color:#111;font-weight:normal;letter-spacing:0.2px;-webkit-text-stroke:0.25px #111;">Мобилни</div>
<div class="t" style="left:253.5px;top:466.40px;font-size:24px;color:#111;font-weight:normal;letter-spacing:0.2px;-webkit-text-stroke:0.25px #111;">Мтел</div>
<div class="t" style="right:1217.5px;top:466.40px;font-size:24px;color:#111;font-weight:normal;letter-spacing:0.2px;-webkit-text-stroke:0.25px #111;">46,12 лв.</div>
<div class="t" style="right:1088.5px;top:466.40px;font-size:24px;color:#111;font-weight:normal;letter-spacing:0.2px;-webkit-text-stroke:0.25px #111;">54,23 лв.</div>
<div class="t" style="right:959.5px;top:466.40px;font-size:24px;color:#111;font-weight:normal;letter-spacing:0.2px;-webkit-text-stroke:0.25px #111;">65,23 лв.</div>
<div class="t" style="right:830.5px;top:466.40px;font-size:24px;color:#111;font-weight:normal;letter-spacing:0.2px;-webkit-text-stroke:0.25px #111;">78,45 лв.</div>
<div class="t" style="left:57px;top:501.40px;font-size:24px;color:#111;font-weight:normal;letter-spacing:0.2px;-webkit-text-stroke:0.25px #111;">Телевизия</div>
<div class="t" style="left:253.5px;top:501.40px;font-size:24px;color:#111;font-weight:normal;letter-spacing:0.2px;-webkit-text-stroke:0.25px #111;">ТВ директ</div>
<div class="t" style="right:1217.5px;top:501.40px;font-size:24px;color:#111;font-weight:normal;letter-spacing:0.2px;-webkit-text-stroke:0.25px #111;">20,00 лв.</div>
<div class="t" style="right:1088.5px;top:501.40px;font-size:24px;color:#111;font-weight:normal;letter-spacing:0.2px;-webkit-text-stroke:0.25px #111;">20,00 лв.</div>
<div class="t" style="right:959.5px;top:501.40px;font-size:24px;color:#111;font-weight:normal;letter-spacing:0.2px;-webkit-text-stroke:0.25px #111;">20,00 лв.</div>
<div class="t" style="right:830.5px;top:501.40px;font-size:24px;color:#111;font-weight:normal;letter-spacing:0.2px;-webkit-text-stroke:0.25px #111;">20,00 лв.</div>
<div class="t" style="left:57px;top:536.40px;font-size:24px;color:#111;font-weight:normal;letter-spacing:0.2px;-webkit-text-stroke:0.25px #111;">Парно</div>
<div class="t" style="left:253.5px;top:536.40px;font-size:24px;color:#111;font-weight:normal;letter-spacing:0.2px;-webkit-text-stroke:0.25px #111;">Топлофикация</div>
<div class="t" style="left:451px;top:536.55px;font-size:25px;color:#e21b1b;font-weight:bold;transform:scaleX(0.935);transform-origin:0 0;">############</div>
<div class="t" style="right:1088.5px;top:536.40px;font-size:24px;color:#111;font-weight:normal;letter-spacing:0.2px;-webkit-text-stroke:0.25px #111;">230,56 лв.</div>
<div class="t" style="right:959.5px;top:536.40px;font-size:24px;color:#111;font-weight:normal;letter-spacing:0.2px;-webkit-text-stroke:0.25px #111;">185,65 лв.</div>
<div class="t" style="right:830.5px;top:536.40px;font-size:24px;color:#111;font-weight:normal;letter-spacing:0.2px;-webkit-text-stroke:0.25px #111;">78,45 лв.</div>
<div class="t" style="left:57px;top:571.40px;font-size:24px;color:#111;font-weight:normal;letter-spacing:0.2px;-webkit-text-stroke:0.25px #111;">Кредит</div>
<div class="t" style="left:253.5px;top:571.40px;font-size:24px;color:#111;font-weight:normal;letter-spacing:0.2px;-webkit-text-stroke:0.25px #111;">КредитПро</div>
<div class="t" style="right:1217.5px;top:571.40px;font-size:24px;color:#111;font-weight:normal;letter-spacing:0.2px;-webkit-text-stroke:0.25px #111;">75,00 лв.</div>
<div class="t" style="right:1088.5px;top:571.40px;font-size:24px;color:#111;font-weight:normal;letter-spacing:0.2px;-webkit-text-stroke:0.25px #111;">75,00 лв.</div>
<div class="t" style="right:959.5px;top:571.40px;font-size:24px;color:#111;font-weight:normal;letter-spacing:0.2px;-webkit-text-stroke:0.25px #111;">75,00 лв.</div>
<div class="t" style="right:830.5px;top:571.40px;font-size:24px;color:#111;font-weight:normal;letter-spacing:0.2px;-webkit-text-stroke:0.25px #111;">75,00 лв.</div>
<div class="t" style="left:57px;top:606.40px;font-size:24px;color:#111;font-weight:normal;letter-spacing:0.2px;-webkit-text-stroke:0.25px #111;">Интернет</div>
<div class="t" style="left:253.5px;top:606.40px;font-size:24px;color:#111;font-weight:normal;letter-spacing:0.2px;-webkit-text-stroke:0.25px #111;">Нет1</div>
<div class="t" style="right:1217.5px;top:606.40px;font-size:24px;color:#111;font-weight:normal;letter-spacing:0.2px;-webkit-text-stroke:0.25px #111;">25,00 лв.</div>
<div class="t" style="right:1088.5px;top:606.40px;font-size:24px;color:#111;font-weight:normal;letter-spacing:0.2px;-webkit-text-stroke:0.25px #111;">25,00 лв.</div>
<div class="t" style="right:959.5px;top:606.40px;font-size:24px;color:#111;font-weight:normal;letter-spacing:0.2px;-webkit-text-stroke:0.25px #111;">25,00 лв.</div>
<div class="t" style="right:830.5px;top:606.40px;font-size:24px;color:#111;font-weight:normal;letter-spacing:0.2px;-webkit-text-stroke:0.25px #111;">25,00 лв.</div>
<div class="t" style="left:57px;top:641.40px;font-size:24px;color:#111;font-weight:normal;letter-spacing:0.2px;-webkit-text-stroke:0.25px #111;">Детска градина</div>
<div class="t" style="left:253.5px;top:641.40px;font-size:24px;color:#111;font-weight:normal;letter-spacing:0.2px;-webkit-text-stroke:0.25px #111;">Община</div>
<div class="t" style="right:1217.5px;top:641.40px;font-size:24px;color:#111;font-weight:normal;letter-spacing:0.2px;-webkit-text-stroke:0.25px #111;">80,00 лв.</div>
<div class="t" style="right:1088.5px;top:641.40px;font-size:24px;color:#111;font-weight:normal;letter-spacing:0.2px;-webkit-text-stroke:0.25px #111;">80,00 лв.</div>
<div class="t" style="right:959.5px;top:641.40px;font-size:24px;color:#111;font-weight:normal;letter-spacing:0.2px;-webkit-text-stroke:0.25px #111;">80,00 лв.</div>
<div class="t" style="right:830.5px;top:641.40px;font-size:24px;color:#111;font-weight:normal;letter-spacing:0.2px;-webkit-text-stroke:0.25px #111;">80,00 лв.</div>
<div class="t" style="left:57px;top:676.40px;font-size:24px;color:#111;font-weight:normal;letter-spacing:0.2px;-webkit-text-stroke:0.25px #111;">Вход</div>
<div class="t" style="left:253.5px;top:676.40px;font-size:24px;color:#111;font-weight:normal;letter-spacing:0.2px;-webkit-text-stroke:0.25px #111;">Домсъвет</div>
<div class="t" style="right:1217.5px;top:676.40px;font-size:24px;color:#111;font-weight:normal;letter-spacing:0.2px;-webkit-text-stroke:0.25px #111;">14,00 лв.</div>
<div class="t" style="right:1088.5px;top:676.40px;font-size:24px;color:#111;font-weight:normal;letter-spacing:0.2px;-webkit-text-stroke:0.25px #111;">14,00 лв.</div>
<div class="t" style="right:959.5px;top:676.40px;font-size:24px;color:#111;font-weight:normal;letter-spacing:0.2px;-webkit-text-stroke:0.25px #111;">14,00 лв.</div>
<div class="t" style="right:830.5px;top:676.40px;font-size:24px;color:#111;font-weight:normal;letter-spacing:0.2px;-webkit-text-stroke:0.25px #111;">13,50 лв.</div>
<div class="t" style="left:57px;top:711.40px;font-size:24px;color:#111;font-weight:normal;letter-spacing:0.2px;-webkit-text-stroke:0.25px #111;">Сума</div>
<div class="t" style="left:451px;top:711.55px;font-size:25px;color:#111;font-weight:bold;transform:scaleX(0.935);transform-origin:0 0;">############</div>
<div class="t" style="right:1088.5px;top:711.40px;font-size:24px;color:#111;font-weight:normal;letter-spacing:0.2px;-webkit-text-stroke:0.25px #111;">581,00 лв.</div>
<div class="t" style="right:959.5px;top:711.40px;font-size:24px;color:#111;font-weight:normal;letter-spacing:0.2px;-webkit-text-stroke:0.25px #111;">547,18 лв.</div>
<div class="t" style="right:830.5px;top:711.40px;font-size:24px;color:#111;font-weight:normal;letter-spacing:0.2px;-webkit-text-stroke:0.25px #111;">439,00 лв.</div>
<div class="t" style="right:663.5px;top:711.40px;font-size:24px;color:#111;font-weight:normal;letter-spacing:0.2px;-webkit-text-stroke:0.25px #111;">0,00 лв.</div>
<div class="t" style="right:496.5px;top:711.40px;font-size:24px;color:#111;font-weight:normal;letter-spacing:0.2px;-webkit-text-stroke:0.25px #111;">0,00 лв.</div>
<div class="t" style="right:329.5px;top:711.40px;font-size:24px;color:#111;font-weight:normal;letter-spacing:0.2px;-webkit-text-stroke:0.25px #111;">0,00 лв.</div>
<div class="t" style="right:162.5px;top:711.40px;font-size:24px;color:#111;font-weight:normal;letter-spacing:0.2px;-webkit-text-stroke:0.25px #111;">0,00 лв.</div>
<div class="t" style="right:-4.5px;top:711.40px;font-size:24px;color:#111;font-weight:normal;letter-spacing:0.2px;-webkit-text-stroke:0.25px #111;">0,00 лв.</div>
</div>
<div style="position:absolute;left:1585px;top:162px;width:214px;height:478px;background:rgba(0,0,0,0.10);filter:blur(2px);"></div>
<div style="position:absolute;left:1583px;top:160px;width:214px;height:478px;background:#fff;box-sizing:border-box;border:1px solid #c6c6c6;"></div>
<div style="position:absolute;left:1584px;top:161px;width:211px;height:28px;background:#e8e8e8;"></div>
<div class="t" style="left:1591px;top:169.10px;font-size:14px;color:#555;font-weight:bold;">Cell Size</div>
<div class="t" style="left:1620px;top:197.25px;font-size:15px;color:#5f5f5f;font-weight:normal;">Row <u>H</u>eight...</div>
<svg style="position:absolute;left:1589px;top:193px;" width="19" height="19" viewBox="0 0 19 19"><path d="M4 1v16M1.5 3.5l2.5-2.5 2.5 2.5M1.5 14.5l2.5 2.5 2.5-2.5" fill="none" stroke="#3a78c2" stroke-width="1.2"/><path d="M17 2h-7v15h7" fill="none" stroke="#555" stroke-width="1.2"/></svg>
<div class="t" style="left:1620px;top:227.25px;font-size:15px;color:#5f5f5f;font-weight:normal;"><u>A</u>utoFit Row Height</div>
<div style="position:absolute;left:1620px;top:249px;width:174px;height:1px;background:#e3e3e3;"></div>
<svg style="position:absolute;left:1589px;top:256px;" width="19" height="17" viewBox="0 0 19 17"><path d="M1 7v-6h16v6" fill="none" stroke="#555" stroke-width="1.2"/><path d="M1 14h17M3.5 11.5l-2.5 2.5 2.5 2.5M15.5 11.5l2.5 2.5-2.5 2.5" fill="none" stroke="#3a78c2" stroke-width="1.2"/></svg>
<div class="t" style="left:1620px;top:259.25px;font-size:15px;color:#5f5f5f;font-weight:normal;">Column <u>W</u>idth...</div>
<div style="position:absolute;left:1584px;top:282px;width:211px;height:29px;background:#c6c6c6;"></div>
<div class="t" style="left:1620px;top:289.25px;font-size:15px;color:#444;font-weight:normal;">AutoF<u>i</u>t Column Width</div>
<div class="t" style="left:1620px;top:319.25px;font-size:15px;color:#5f5f5f;font-weight:normal;"><u>D</u>efault Width...</div>
<div style="position:absolute;left:1584px;top:342px;width:211px;height:26px;background:#e8e8e8;"></div>
<div class="t" style="left:1591px;top:348.10px;font-size:14px;color:#555;font-weight:bold;">Visibility</div>
<div class="t" style="left:1620px;top:377.25px;font-size:15px;color:#5f5f5f;font-weight:normal;">Hide &amp; <u>U</u>nhide</div>
<svg style="position:absolute;left:1779px;top:380px;" width="4" height="7" viewBox="0 0 4 7"><path d="M0 0l4 3.5-4 3.5z" fill="#555"/></svg>
<div style="position:absolute;left:1584px;top:400px;width:211px;height:26px;background:#e8e8e8;"></div>
<div class="t" style="left:1591px;top:406.10px;font-size:14px;color:#555;font-weight:bold;">Organize Sheets</div>
<div class="t" style="left:1620px;top:435.25px;font-size:15px;color:#5f5f5f;font-weight:normal;"><u>R</u>ename Sheet</div>
<div class="t" style="left:1620px;top:464.25px;font-size:15px;color:#5f5f5f;font-weight:normal;"><u>M</u>ove or Copy Sheet...</div>
<div class="t" style="left:1620px;top:495.25px;font-size:15px;color:#5f5f5f;font-weight:normal;"><u>T</u>ab Color</div>
<svg style="position:absolute;left:1779px;top:498px;" width="4" height="7" viewBox="0 0 4 7"><path d="M0 0l4 3.5-4 3.5z" fill="#555"/></svg>
<div style="position:absolute;left:1584px;top:518px;width:211px;height:27px;background:#e8e8e8;"></div>
<div class="t" style="left:1591px;top:525.10px;font-size:14px;color:#555;font-weight:bold;">Protection</div>
<svg style="position:absolute;left:1589px;top:550px;" width="19" height="19" viewBox="0 0 19 19"><rect x="0.5" y="0.5" width="15" height="13" fill="#fff" stroke="#555"/><path d="M0 5h16M0 9.5h16M5.5 0v14M10.5 0v14" stroke="#777"/><rect x="11" y="11" width="7" height="7" fill="#e9c07f"/></svg>
<div class="t" style="left:1620px;top:553.25px;font-size:15px;color:#5f5f5f;font-weight:normal;"><u>P</u>rotect Sheet...</div>
<div style="position:absolute;left:1586px;top:577px;width:25px;height:25px;background:#fcfcfc;box-sizing:border-box;border:1px solid #9ccbe8;"></div>
<svg style="position:absolute;left:1591px;top:581px;" width="15" height="17" viewBox="0 0 15 17"><path d="M4 7v-3a3.5 3.5 0 0 1 7 0v3" fill="none" stroke="#e2b36a" stroke-width="2"/><rect x="1" y="7" width="13" height="9" fill="#e9c07f"/></svg>
<div class="t" style="left:1620px;top:583.25px;font-size:15px;color:#5f5f5f;font-weight:normal;"><u>L</u>ock Cell</div>
<div style="position:absolute;left:1623px;top:605px;width:170px;height:1px;background:#e3e3e3;"></div>
<svg style="position:absolute;left:1590px;top:611px;" width="17" height="19" viewBox="0 0 17 19"><rect x="0.5" y="0.5" width="16" height="18" fill="#fff" stroke="#555"/><path d="M0 1.5h17" stroke="#2f5fa0" stroke-width="2"/><path d="M3 6h2M7 6h7M3 10h2M7 10h7M3 14h2M7 14h7" stroke="#555"/></svg>
<div class="t" style="left:1620px;top:615.25px;font-size:15px;color:#5f5f5f;font-weight:normal;">Format C<u>e</u>lls...</div>
<svg style="position:absolute;left:0;top:0" width="1824" height="844"><path d="M836 221L589.5 316.8" stroke="#f20000" stroke-width="8" stroke-linecap="butt"/><path d="M609.5 294L589.5 316.8L620 320" fill="none" stroke="#f20000" stroke-width="8" stroke-linejoin="miter" stroke-miterlimit="10"/><path d="M241 256L112.7 70.7" stroke="#f20000" stroke-width="8" stroke-linecap="butt"/><path d="M117 100.5L112.7 70.7L139.5 85.3" fill="none" stroke="#f20000" stroke-width="8" stroke-linejoin="miter" stroke-miterlimit="10"/><path d="M1248 225L1573.5 149.6" stroke="#f20000" stroke-width="8" stroke-linecap="butt"/><path d="M1542.5 142L1573.5 149.6L1549 169" fill="none" stroke="#f20000" stroke-width="8" stroke-linejoin="miter" stroke-miterlimit="10"/><path d="M1390 524L1594 298" stroke="#f20000" stroke-width="8" stroke-linecap="butt"/><path d="M1565 308L1594 298L1586.5 327" fill="none" stroke="#f20000" stroke-width="8" stroke-linejoin="miter" stroke-miterlimit="10"/></svg>
<div class="t" style="left:846px;top:192.00px;font-size:40px;color:#f20000;font-weight:bold;">1.</div>
<div class="t" style="left:265px;top:242.00px;font-size:40px;color:#f20000;font-weight:bold;">2.</div>
<div class="t" style="left:1217px;top:209.00px;font-size:40px;color:#f20000;font-weight:bold;">3.</div>
<div class="t" style="left:1358px;top:512.00px;font-size:40px;color:#f20000;font-weight:bold;">4.</div>
</body></html>
